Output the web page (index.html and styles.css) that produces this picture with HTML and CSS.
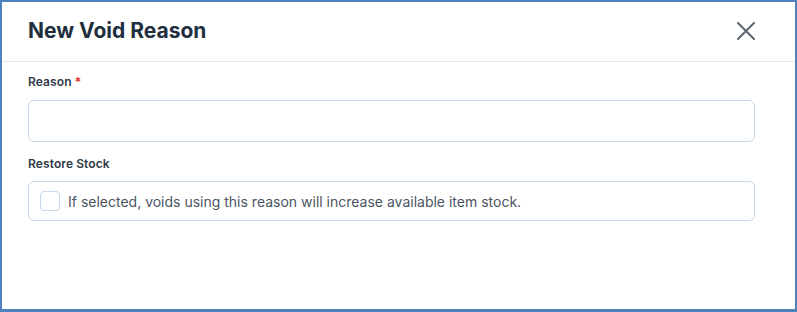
FILE: index.html
```html
<!DOCTYPE html>
<html>
<head>
<meta charset="utf-8">
<link rel="stylesheet" href="styles.css">
</head>
<body>
<div class="frame">
  <div class="header">
    <h1 class="title">New Void Reason</h1>
    <button class="close" aria-label="Close">
      <svg width="18" height="18" viewBox="0 0 18 18"><path d="M1 1 L17 17 M17 1 L1 17" stroke="#5b6570" stroke-width="2" stroke-linecap="round" fill="none"/></svg>
    </button>
  </div>
  <div class="body">
    <label class="label">Reason <span class="req">*</span></label>
    <div class="input"></div>
    <label class="label second">Restore Stock</label>
    <div class="check-row">
      <span class="checkbox"></span>
      <span class="check-text">If selected, voids using this reason will increase available item stock.</span>
    </div>
  </div>
</div>
</body>
</html>
```
FILE: styles.css
```css
html, body { margin: 0; padding: 0; background: #fff; }
.frame {
  width: 797px;
  height: 312px;
  box-sizing: border-box;
  border: 2px solid #4f81bd;
  border-bottom-width: 3px;
  font-family: Inter, "Noto Sans", sans-serif;
  background: #fff;
}
.header {
  height: 60px;
  box-sizing: border-box;
  border-bottom: 1px solid #e5e8eb;
  display: flex;
  align-items: center;
  justify-content: space-between;
  padding: 0 40px 0 26px;
}
.title {
  margin: 0;
  font-size: 21px;
  font-weight: 700;
  color: #1f2f3e;
  letter-spacing: 0;
  margin-top: -2px;
}
.close {
  border: 0;
  background: none;
  padding: 0;
  width: 18px;
  height: 18px;
  display: flex;
  margin-top: -1px;
}
.body {
  padding: 12px 40px 0 26px;
  display: flex;
  flex-direction: column;
}
.label {
  font-size: 12px;
  font-weight: 600;
  color: #2d3a48;
  line-height: 16px;
  letter-spacing: 0.1px;
}
.req { color: #e02424; }
.second { margin-top: 14px; }
.input {
  margin-top: 10px;
  height: 42px;
  box-sizing: border-box;
  border: 1px solid #c6d8ea;
  border-radius: 6px;
}
.check-row {
  margin-top: 9px;
  height: 40px;
  box-sizing: border-box;
  border: 1px solid #c6d8ea;
  border-radius: 6px;
  display: flex;
  align-items: center;
  padding-left: 11px;
  gap: 8px;
}
.checkbox {
  width: 20px;
  height: 20px;
  box-sizing: border-box;
  border: 1px solid #c6d8ea;
  border-radius: 4px;
  flex: none;
}
.check-text {
  font-size: 14px;
  color: #4b5563;
}
```
